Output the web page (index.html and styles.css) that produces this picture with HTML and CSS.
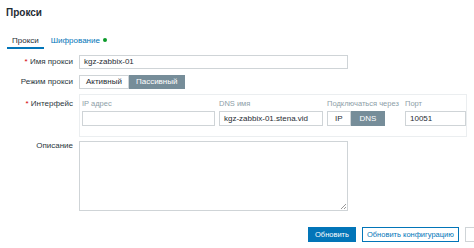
FILE: index.html
```html
<!DOCTYPE html>
<html lang="ru">
<head>
<meta charset="utf-8">
<link rel="stylesheet" href="styles.css">
</head>
<body>
<div class="page">
  <div class="title">Прокси</div>
  <div class="tabs">
    <div class="tab active">Прокси</div>
    <div class="tab link">Шифрование <span class="dot"></span></div>
  </div>
  <div class="form">
    <div class="lbl req">Имя прокси</div>
    <div class="field"><div class="input wide">kgz-zabbix-01</div></div>

    <div class="lbl">Режим прокси</div>
    <div class="field">
      <div class="seg">
        <div class="seg-item">Активный</div>
        <div class="seg-item on">Пассивный</div>
      </div>
    </div>

    <div class="lbl req lbl-iface">Интерфейс</div>
    <div class="field">
      <div class="iface">
        <div class="col c-ip"><div class="hdr">IP адрес</div><div class="input"></div></div>
        <div class="col c-dns"><div class="hdr">DNS имя</div><div class="input">kgz-zabbix-01.stena.vid</div></div>
        <div class="col c-via"><div class="hdr">Подключаться через</div>
          <div class="seg small"><div class="seg-item">IP</div><div class="seg-item on">DNS</div></div>
        </div>
        <div class="col c-port"><div class="hdr">Порт</div><div class="input">10051</div></div>
      </div>
    </div>

    <div class="lbl lbl-desc">Описание</div>
    <div class="field"><div class="textarea"><span class="grip"></span></div></div>
  </div>
  <div class="footer">
    <div class="btn primary">Обновить</div>
    <div class="btn">Обновить конфигурацию</div>
    <div class="btn stub"></div>
  </div>
</div>
</body>
</html>
```
FILE: styles.css
```css
* { box-sizing: border-box; }
html, body { margin: 0; padding: 0; background: #fff; }
body {
  font-family: "Liberation Sans", Arial, sans-serif;
  font-size: 7.5px;
  color: #1f2c33;
  width: 474px;
  height: 248px;
  overflow: hidden;
}
.page { width: 474px; height: 248px; overflow: hidden; }
.title {
  font-weight: bold;
  font-size: 10px;
  padding: 7px 0 0 6px;
  height: 33px;
}
.tabs {
  display: flex;
  height: 16px;
  padding-left: 7px;
}
.tab {
  padding: 3px 5px 0 5px;
  height: 16px;
  line-height: 9px;
  font-size: 8px;
}
.tab.active { border-bottom: 2px solid #0275b8; color: #1f2c33; }
.tab.link { color: #0275b8; padding-left: 7px; }
.dot {
  display: inline-block;
  width: 4px; height: 4px;
  border-radius: 50%;
  background: #0b9a2a;
  margin-left: 1px;
  vertical-align: 1px;
}
.form {
  display: grid;
  grid-template-columns: 73px 1fr;
  column-gap: 6px;
  row-gap: 6px;
  padding-top: 6px;
  padding-right: 7px;
}
.lbl {
  text-align: right;
  line-height: 14px;
  white-space: nowrap;
  color: #2a363c;
  font-size: 8px;
}
.req::before { content: "* "; color: #d40000; }
.lbl-iface { padding-top: 2px; }
.lbl-desc { line-height: 10px; margin-top: -2px; }
.field { min-height: 14px; }
.input {
  height: 14px;
  border: 1px solid #cfd4d7;
  background: #fff;
  padding: 0 4px;
  line-height: 12px;
  white-space: nowrap;
  overflow: hidden;
  font-size: 8px;
}
.input.wide { width: 269px; }
.seg { display: flex; }
.seg-item {
  height: 14px;
  line-height: 12px;
  border: 1px solid #cfd4d7;
  padding: 0 6px;
  color: #1f2c33;
  background: #fff;
  font-size: 8px;
}
.seg-item.on { background: #768d99; border-color: #768d99; color: #fff; }
.iface {
  border: 1px solid #ebeef0;
  height: 43px;
  display: flex;
  padding: 3px 0 0 2px;
  gap: 4px;
  margin-top: -1px;
}
.hdr {
  color: #8d9ea7;
  line-height: 10px;
  height: 13px;
  padding-top: 1px;
  white-space: nowrap;
}
.col .input { height: 15px; line-height: 13px; }
.c-ip { width: 133px; }
.c-dns { width: 104px; }
.c-via { width: 70px; }
.c-port { width: 61px; margin-left: 4px; }
.seg.small .seg-item { height: 15px; line-height: 13px; padding: 0 7px; }
.seg.small .seg-item.on { padding: 0 8px; }
.textarea {
  width: 269px;
  height: 70px;
  border: 1px solid #cfd4d7;
  position: relative;
  margin-top: -2px;
}
.grip {
  position: absolute;
  right: 1px; bottom: 1px;
  width: 5px; height: 5px;
  background: linear-gradient(135deg, transparent 45%, #999 45%, #999 55%, transparent 55%, transparent 75%, #999 75%, #999 85%, transparent 85%);
}
.footer {
  display: flex;
  gap: 6px;
  padding-left: 308px;
  margin-top: 16px;
  white-space: nowrap;
}
.btn {
  height: 15px;
  line-height: 13px;
  border: 1px solid #0275b8;
  color: #0275b8;
  padding: 0 4px;
  background: #fff;
  flex-shrink: 0;
}
.btn.primary { background: #0275b8; color: #fff; padding: 0 6px; }
.btn.stub { width: 40px; border-color: #cfd4d7; }
```
